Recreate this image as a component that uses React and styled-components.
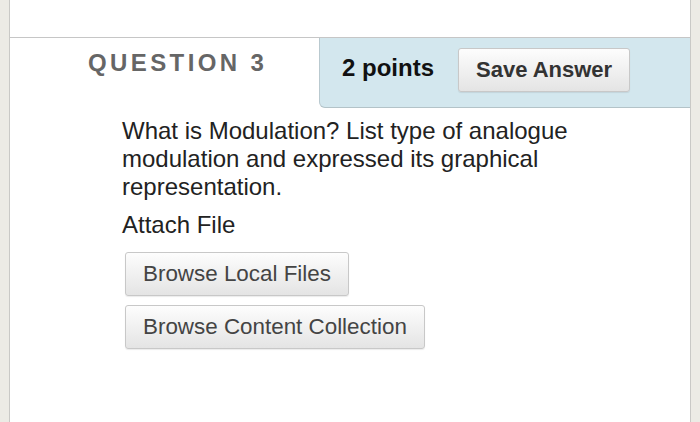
import React from 'react'
import styled, { createGlobalStyle } from 'styled-components'

const GlobalStyle = createGlobalStyle`
  html, body {
    margin: 0;
    padding: 0;
    background: #ecebe5;
    font-family: "Liberation Sans", Arial, sans-serif;
  }
`

export default function App() {
  return (
    <>
      <GlobalStyle />
      <Page>
        <Panel>
          <TopSpace />
          <Header>
            <Title>QUESTION 3</Title>
            <PointsBox>
              <Points>2 points</Points>
              <Button bold>Save Answer</Button>
            </PointsBox>
          </Header>
          <Body>
            <Question>
              What is Modulation? List type of analogue modulation and expressed its graphical representation.
            </Question>
            <Attach>Attach File</Attach>
            <ButtonList>
              <Button>Browse Local Files</Button>
              <Button>Browse Content Collection</Button>
            </ButtonList>
          </Body>
        </Panel>
      </Page>
    </>
  )
}

const Page = styled.div`
  width: 700px;
  height: 422px;
  padding: 0 9px;
  box-sizing: border-box;
  background: #ecebe5;
`

const Panel = styled.div`
  height: 100%;
  background: #fff;
  border-left: 1px solid #c9c9c6;
  border-right: 1px solid #c9c9c6;
  display: flex;
  flex-direction: column;
`

const TopSpace = styled.div`
  height: 37px;
`

const Header = styled.div`
  display: flex;
  border-top: 1px solid #c6c6c6;
  height: 70px;
`

const Title = styled.div`
  flex: 1;
  padding: 11px 0 0 78px;
  font-size: 24px;
  font-weight: bold;
  letter-spacing: 3.4px;
  color: #666;
`

const PointsBox = styled.div`
  width: 371px;
  box-sizing: border-box;
  background: #d3e7ee;
  border-left: 1px solid #b9c9cf;
  border-bottom: 1px solid #b3c3c8;
  border-bottom-left-radius: 6px;
  display: flex;
  align-items: flex-start;
  padding: 10px 0 0 22px;
  gap: 24px;
`

const Points = styled.div`
  font-size: 24px;
  font-weight: bold;
  color: #111;
  margin-top: 6px;
`

const Button = styled.button`
  font-family: "Liberation Sans", Arial, sans-serif;
  font-size: ${p => (p.bold ? '22px' : '22.4px')};
  font-weight: ${p => (p.bold ? 'bold' : 'normal')};
  color: ${p => (p.bold ? '#333' : '#444')};
  height: 44px;
  padding: 0 17px;
  border: 1px solid #c8c8c8;
  border-radius: 3px;
  background: linear-gradient(#fdfdfd, #e4e4e4);
  box-shadow: 0 1px 1px rgba(0, 0, 0, 0.08);
  align-self: flex-start;
`

const Body = styled.div`
  padding: 9px 0 0 112px;
  display: flex;
  flex-direction: column;
`

const Question = styled.div`
  width: 470px;
  font-size: 24px;
  line-height: 28px;
  color: #222;
`

const Attach = styled.div`
  margin-top: 10px;
  font-size: 24px;
  line-height: 28px;
  color: #222;
`

const ButtonList = styled.div`
  margin: 13px 0 0 3px;
  display: flex;
  flex-direction: column;
  gap: 9px;
`
